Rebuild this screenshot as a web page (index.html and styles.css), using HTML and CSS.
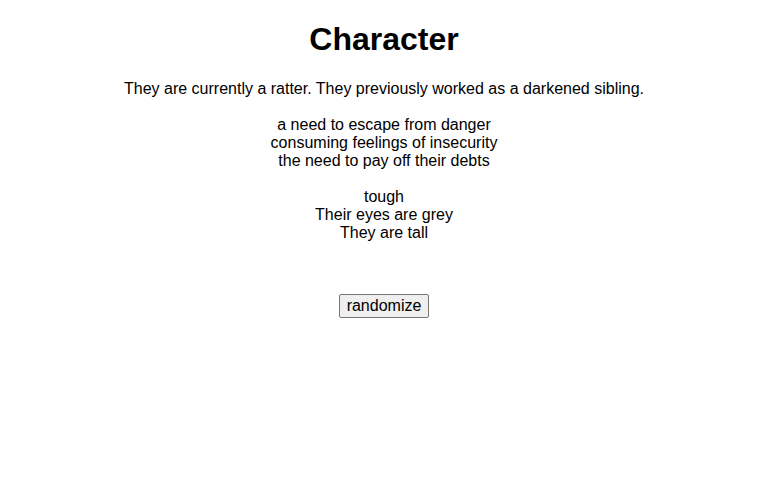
FILE: index.html
```html
<!DOCTYPE html>
<html>
  <head>
    <title>Character</title>
    <link rel="stylesheet" href="styles.css">
  </head>
  <body>
    <div class="sheet">
      <h1 class="title">Character</h1>
      <div class="block">
        <div class="line">They are currently a ratter. They previously worked as a darkened sibling.</div>
      </div>
      <div class="block">
        <div class="line">a need to escape from danger</div>
        <div class="line">consuming feelings of insecurity</div>
        <div class="line">the need to pay off their debts</div>
      </div>
      <div class="block">
        <div class="line">tough</div>
        <div class="line">Their eyes are grey</div>
        <div class="line">They are tall</div>
      </div>
      <div class="actions">
        <button class="randomize">randomize</button>
      </div>
    </div>
  </body>
</html>
```

FILE: styles.css
```css
body {
  margin: 0;
  background: #fff;
  color: #000;
  font-family: "Liberation Sans", Arial, sans-serif;
  font-size: 16px;
}

.sheet {
  display: flex;
  flex-direction: column;
  align-items: center;
  text-align: center;
}

.title {
  margin: 21px 0 22px;
  font-size: 32px;
  line-height: 37px;
  font-weight: bold;
}

.block {
  margin-bottom: 18px;
}

.line {
  line-height: 18px;
}

.actions {
  margin-top: 34px;
}

.randomize {
  font-family: "Liberation Sans", Arial, sans-serif;
  font-size: 16px;
  line-height: 18px;
  padding: 2px 7px;
  color: #000;
  background: #efefef;
  border: 1px solid #767676;
  border-radius: 2px;
}
```
